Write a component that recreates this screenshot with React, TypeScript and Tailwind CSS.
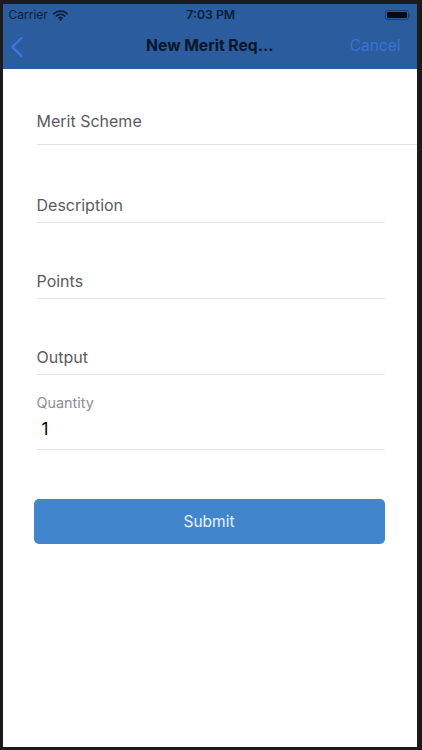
const FONT = "font-['Inter','Liberation_Sans',sans-serif]"

function Field({ label, className }: { label: string; className: string }) {
  return (
    <div className={`${className} border-b border-[#e2e2e8] text-[16px] leading-[20px] text-[#5b5b5f]`}>
      {label}
    </div>
  )
}

export default function App() {
  return (
    <div className={`${FONT} flex h-[750px] w-[422px] flex-col overflow-hidden bg-[#1b1b1b] pb-[3px] pl-[2.5px] pr-[5px] pt-[4px]`}>
      <header className="h-[65px] shrink-0 bg-[#2a5c9e]">
        <div className="flex h-[20px] items-center justify-between pl-[6px] pr-[6px] pt-[2px] text-[#0c2038]">
          <div className="flex w-[120px] items-center gap-[5px] text-[12px]">
            <span>Carrier</span>
            <svg width="15" height="11" viewBox="0 0 15 11" fill="none" stroke="#0b1d33" strokeLinecap="round">
              <path d="M1 3.6C4.6.4 10.4.4 14 3.6" strokeWidth="1.7" />
              <path d="M3.4 5.9c2.3-2 5.9-2 8.2 0" strokeWidth="1.7" />
              <path d="M5.8 8c1-.8 2.4-.8 3.4 0" strokeWidth="1.6" />
              <circle cx="7.5" cy="9.7" r=".7" fill="#0b1d33" />
            </svg>
          </div>
          <span className="ml-[2px] text-[12.3px] font-semibold">7:03 PM</span>
          <div className="flex w-[120px] items-center justify-end pr-[1px]">
            <div className="flex h-[10px] w-[24px] items-center rounded-[2.5px] border border-[#1c3f70] p-[1px]">
              <div className="h-full w-full rounded-[1px] bg-[#050a12]" />
            </div>
            <div className="ml-[0.5px] h-[3px] w-[1px] bg-[#1c3f70]" />
          </div>
        </div>
        <div className="relative flex h-[44px] items-center justify-center">
          <svg className="absolute left-[7px] top-[12px]" width="14" height="22" viewBox="0 0 14 22" fill="none" stroke="#3a78e0" strokeWidth="2.4">
            <path d="M12 1.5 2.5 11l9.5 9.5" />
          </svg>
          <span className="text-[15.7px] font-bold text-[#07162a]">New Merit Req...</span>
          <span className="absolute right-[16.5px] top-[12px] text-[15.5px] leading-[20px] text-[#3b72d6]">Cancel</span>
        </div>
      </header>
      <main className="flex-1 bg-white pl-[34px]">
        <Field label="Merit Scheme" className="mt-[42px] h-[34px]" />
        <Field label="Description" className="mr-[32px] mt-[50px] h-[28px]" />
        <Field label="Points" className="mr-[32px] mt-[48px] h-[28px]" />
        <Field label="Output" className="mr-[32px] mt-[48px] h-[28px]" />
        <div className="mr-[32px] mt-[18px] h-[57px] border-b border-[#e2e2e8]">
          <div className="text-[14.4px] leading-[20px] text-[#8e8e93]">Quantity</div>
          <div className="mt-[6px] pl-[5px] text-[17px] leading-[20px] text-black">1</div>
        </div>
        <button className="mt-[49px] block h-[45px] w-[351px] -translate-x-[3px] rounded-[5px] bg-[#4186cd] text-[15.5px] text-[#e8f1fa]">
          Submit
        </button>
      </main>
    </div>
  )
}
